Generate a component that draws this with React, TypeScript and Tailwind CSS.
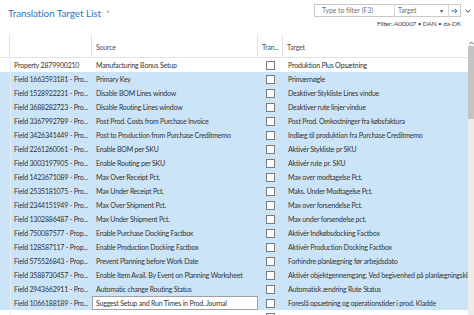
import React from "react";

const rows: [string, string, string][] = [
  ["Property 2879900210", "Manufacturing Bonus Setup", "Produktion Plus Opsætning"],
  ["Field 1663593181 - Pro...", "Primary Key", "Primærnøgle"],
  ["Field 1528922231 - Pro...", "Disable BOM Lines window", "Deaktiver Stykliste Lines vindue"],
  ["Field 3688282723 - Pro...", "Disable Routing Lines window", "Deaktiver rute linjer vindue"],
  ["Field 3367992789 - Pro...", "Post Prod. Costs from Purchase Invoice", "Post Prod. Omkostninger fra købsfaktura"],
  ["Field 3426341449 - Pro...", "Post to Production from Purchase Creditmemo", "Indlæg til produktion fra Purchase Creditmemo"],
  ["Field 2261260061 - Pro...", "Enable BOM per SKU", "Aktivér Stykliste pr SKU"],
  ["Field 3003197905 - Pro...", "Enable Routing per SKU", "Aktivér rute pr. SKU"],
  ["Field 1423671089 - Pro...", "Max Over Receipt Pct.", "Max over modtagelse Pct."],
  ["Field 2535181075 - Pro...", "Max Under Receipt Pct.", "Maks. Under Modtagelse Pct."],
  ["Field 2344151949 - Pro...", "Max Over Shipment Pct.", "Max over forsendelse Pct."],
  ["Field 1302886487 - Pro...", "Max Under Shipment Pct.", "Max under forsendelse pct."],
  ["Field 750087577 - Prop...", "Enable Purchase Docking Factbox", "Aktivér Indkøbsdocking Factbox"],
  ["Field 128587117 - Prop...", "Enable Production Docking Factbox", "Aktivér Production Docking Factbox"],
  ["Field 575526843 - Prop...", "Prevent Planning before Work Date", "Forhindre planlægning før arbejdsdato"],
  ["Field 3588730457 - Pro...", "Enable Item Avail. By Event on Planning Worksheet", "Aktivér objektgennemgang. Ved begivenhed på planlægningskladde"],
  ["Field 2943662911 - Pro...", "Automatic change Routing Status", "Automatisk ændring Rute Status"],
  ["Field 1066188189 - Pro...", "Suggest Setup and Run Times in Prod. Journal", "Foreslå opsætning og operationstider i prod. Kladde"],
  ["", "", ""],
];

function Checkbox() {
  return <div className="w-[9px] h-[9px] border border-[#7a7a7a] bg-white" />;
}

export default function App() {
  return (
    <div
      className="w-[474px] h-[315px] overflow-hidden bg-white text-[#333333] flex flex-col"
      style={{ fontFamily: 'Lato, "Open Sans", sans-serif' }}
    >
      {/* top bar */}
      <div className="h-[18px] flex items-start shrink-0">
        <div className="ml-[8px] mt-[5px] flex items-center text-[10px] leading-[16px] tracking-[-0.1px] text-[#2f78b9]">
          <span>Translation Target List</span>
          <span className="ml-[5px] text-[8px] text-[#7a7a7a]">˅</span>
        </div>
        <div className="flex-1" />
        <div className="mt-[4px] w-[147px] h-[13px] border border-[#c8c8c8] flex items-center text-[6.8px] text-[#707070]">
          <div className="w-[80px] pl-[7px] border-r border-[#d6d6d6] h-full flex items-center">Type to filter (F3)</div>
          <div className="flex-1 pl-[3px] flex items-center">Target</div>
          <div className="w-[8px] text-[6px] text-[#555]">▾</div>
          <div className="w-[12px] h-full border-l border-[#d6d6d6] flex items-center justify-center">
            <svg width="7" height="6" viewBox="0 0 7 6">
              <path d="M0.5 3 H6 M3.8 0.8 L6 3 L3.8 5.2" stroke="#2f78b9" strokeWidth="1" fill="none" />
            </svg>
          </div>
        </div>
        <div className="w-[13px] mt-[9px] flex justify-center">
          <svg width="6" height="4" viewBox="0 0 6 4">
            <path d="M0.5 0.8 L3 3.2 L5.5 0.8" stroke="#333" strokeWidth="0.9" fill="none" />
          </svg>
        </div>
      </div>
      <div className="h-[10px] flex justify-end pr-[13px] text-[6.5px] leading-[10px] tracking-[-0.15px] text-[#444] shrink-0 mt-[1px]">
        Filter: A00007 • DAN • da-DK
      </div>
      <div className="h-[4px] shrink-0" />

      {/* grid */}
      <div className="flex flex-1 min-h-0">
        <div className="w-[468px] flex flex-col">
          {/* header */}
          <div className="h-[25px] shrink-0 flex border-b border-[#e3e3e3] text-[7px] tracking-[-0.2px] text-[#505050]">
            <div className="w-[10px] border-r border-[#e0e0e0] mt-[2px]" />
            <div className="w-[82px] border-r border-[#e0e0e0] mt-[2px]" />
            <div className="w-[166px] border-r border-[#e0e0e0] mt-[2px] pl-[4px] pt-[3px] flex items-center">Source</div>
            <div className="w-[25px] border-r border-[#e0e0e0] mt-[2px] pl-[4px] pt-[3px] flex items-center whitespace-nowrap overflow-hidden">Tran...</div>
            <div className="flex-1 mt-[2px] pl-[4px] pt-[3px] flex items-center">Target</div>
          </div>
          {rows.map((r, i) => {
            const selected = i > 0 && i < rows.length - 1;
            const editing = i === rows.length - 2;
            return (
              <div
                key={i}
                className={`h-[14px] shrink-0 flex items-center text-[7px] tracking-[-0.2px] whitespace-nowrap ${selected ? "bg-[#cce4f7]" : "bg-white"}`}
              >
                <div className="w-[10px] h-full" />
                <div className="w-[82px] h-full pl-[3px] flex items-center overflow-hidden border-l border-[#e6eef5]">
                  {r[0]}
                </div>
                <div className="w-[166px] h-full flex items-center overflow-hidden">
                  {editing ? (
                    <div className="w-full h-[14px] border border-[#a0a0a0] bg-white flex items-center pl-[3px]">
                      {r[1]}
                    </div>
                  ) : (
                    <span className="pl-[4px]">{r[1]}</span>
                  )}
                </div>
                <div className="w-[25px] h-full flex items-center justify-center pr-[1px]">
                  <Checkbox />
                </div>
                <div className="flex-1 h-full pl-[5px] flex items-center overflow-hidden">{r[2]}</div>
              </div>
            );
          })}
        </div>
        {/* scrollbar */}
        <div className="w-[6px] bg-[#ececec] flex flex-col">
          <div className="h-[12px] bg-white flex items-end justify-center">
            <svg width="5" height="4" viewBox="0 0 5 4">
              <path d="M0.5 3.2 L2.5 1 L4.5 3.2" stroke="#555" strokeWidth="0.9" fill="none" />
            </svg>
          </div>
          <div className="h-[73px] bg-[#c4c4c4] mt-[1px]" />
        </div>
      </div>
    </div>
  );
}
